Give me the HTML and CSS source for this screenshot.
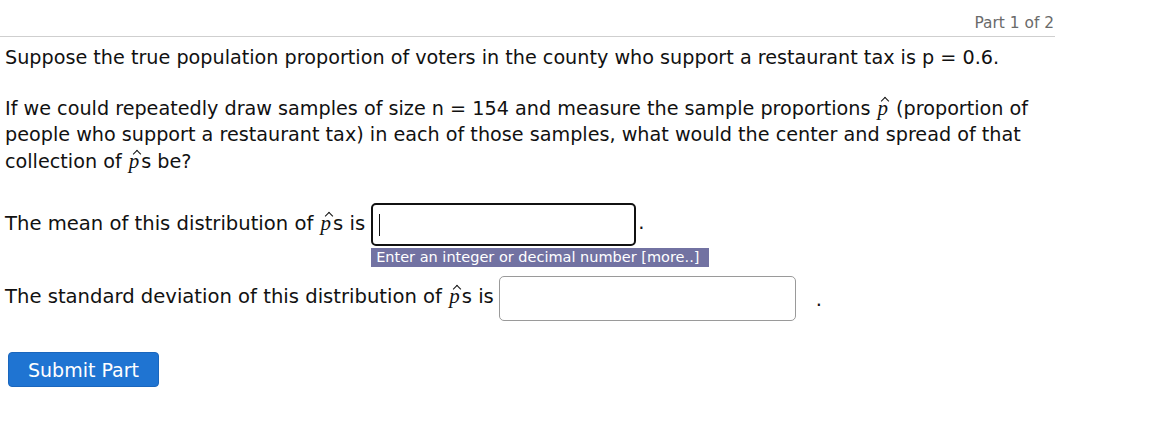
FILE: index.html
```html
<!DOCTYPE html>
<html>
<head>
<meta charset="utf-8">
<link rel="stylesheet" href="styles.css">
</head>
<body>
<div class="page">
  <div class="header"><span class="part">Part 1 of 2</span></div>
  <p class="para first">Suppose the true population proportion of voters in the county who support a restaurant tax is p = 0.6.</p>
  <p class="para">If we could repeatedly draw samples of size n = 154 and measure the sample proportions <span class="phat">p</span> (proportion of people who support a restaurant tax) in each of those samples, what would the center and spread of that collection of <span class="phat">p</span>s be?</p>
  <div class="row mean">
    <span class="label">The mean of this distribution of <span class="phat">p</span>s is</span>
    <div class="field">
      <div class="inline">
        <div class="input focused"><span class="caret"></span></div>
        <span class="dot">.</span>
      </div>
      <div class="hint">Enter an integer or decimal number [more..]</div>
    </div>
  </div>
  <div class="row sd">
    <span class="label">The standard deviation of this distribution of <span class="phat">p</span>s is</span>
    <div class="input plain"></div>
    <span class="dot far">.</span>
  </div>
  <button class="submit">Submit Part</button>
</div>
</body>
</html>
```
FILE: styles.css
```css
html, body { margin: 0; padding: 0; background: #fff; }
body { font-family: "DejaVu Sans", Verdana, sans-serif; color: #111; }
.page { width: 1048px; padding: 0 0 0 5px; }
.header { display: flex; justify-content: flex-end; align-items: flex-end; border-bottom: 1px solid #cfcfcf; height: 37px; box-sizing: border-box; padding: 0 0 3px 0; margin-left: -5px; width: 1055px; }
.part { font-size: 15.4px; color: #6a6a6a; line-height: 20px; margin-right: 1px; }
.para { margin: 0; font-size: 19.2px; line-height: 26.5px; }
.para.first { margin-top: 8px; margin-bottom: 24px; }
.phat { font-family: "Liberation Serif", serif; font-style: italic; font-size: 21px; position: relative; display: inline-block; line-height: 1; margin: 0 2px 0 1px; }
.phat::after { content: ""; position: absolute; left: 5px; top: 0px; width: 5px; height: 5px; border-top: 1.3px solid #111; border-left: 1.3px solid #111; transform: rotate(45deg); }
.row { display: flex; align-items: flex-start; font-size: 19.6px; }
.row.mean { margin-top: 28px; }
.label { line-height: 26px; white-space: nowrap; }
.row.mean .label { margin-top: 8px; }
.field { margin-left: 6px; display: flex; flex-direction: column; align-items: flex-start; }
.inline { display: flex; align-items: flex-start; }
.input { box-sizing: border-box; border-radius: 5px; background: #fff; flex: none; }
.input.focused { width: 265px; height: 43px; border: 2px solid #111; display: flex; align-items: center; padding-left: 6px; }
.caret { width: 1px; height: 22px; background: #111; }
.hint { margin-top: 2px; background: #7272a2; color: #fff; font-size: 14.5px; line-height: 19px; padding: 0 5px; width: 338px; box-sizing: border-box; white-space: nowrap; overflow: hidden; }
.dot { line-height: 26px; margin-top: 7px; margin-left: 2px; }
.row.sd { margin-top: 9px; }
.row.sd .label { margin-top: 8px; }
.input.plain { width: 297px; height: 45px; border: 1px solid #9a9a9a; margin-left: 5px; }
.dot.far { margin-left: 20px; margin-top: 11px; }
.submit { display: block; margin-top: 31px; margin-left: 3px; background: #1f74d2; color: #fff; border: 1px solid #1a66bd; border-radius: 4px; font-family: "DejaVu Sans", Verdana, sans-serif; font-size: 19px; width: 151px; height: 35px; padding: 0; }
```
